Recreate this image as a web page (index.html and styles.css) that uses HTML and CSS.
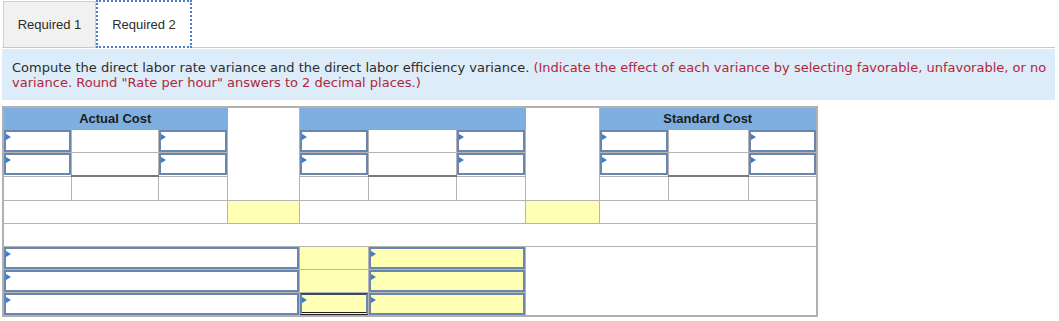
FILE: index.html
```html
<!DOCTYPE html>
<html>
<head>
<meta charset="utf-8">
<link rel="stylesheet" href="styles.css">
</head>
<body>
<div class="page">
  <div class="tabs">
    <div class="tab">Required 1</div>
    <div class="tab active">Required 2</div>
  </div>
  <div class="instr"><span>Compute the direct labor rate variance and the direct labor efficiency variance.</span> <span class="red">(Indicate the effect of each variance by selecting favorable, unfavorable, or no</span> <span class="red">variance. Round "Rate per hour" answers to 2 decimal places.)</span></div>
  <table class="grid">
    <colgroup>
      <col class="c68"><col class="c87"><col class="c69">
      <col class="c72">
      <col class="c69"><col class="c88"><col class="c69">
      <col class="c74">
      <col class="c69"><col class="c80"><col class="c69">
    </colgroup>
    <tr>
      <th colspan="3" class="hdr">Actual Cost</th>
      <td rowspan="4" class="gap"></td>
      <th colspan="3" class="hdr"></th>
      <td rowspan="4" class="gap"></td>
      <th colspan="3" class="hdr">Standard Cost</th>
    </tr>
    <tr>
      <td class="in"><div class="box dd"></div></td><td class="plain"></td><td class="in"><div class="box dd"></div></td>
      <td class="in"><div class="box dd"></div></td><td class="plain"></td><td class="in"><div class="box dd"></div></td>
      <td class="in"><div class="box dd"></div></td><td class="plain"></td><td class="in"><div class="box dd"></div></td>
    </tr>
    <tr>
      <td class="in"><div class="box dd"></div></td><td class="plain tot"></td><td class="in"><div class="box dd"></div></td>
      <td class="in"><div class="box dd"></div></td><td class="plain tot"></td><td class="in"><div class="box dd"></div></td>
      <td class="in"><div class="box dd"></div></td><td class="plain tot"></td><td class="in"><div class="box dd"></div></td>
    </tr>
    <tr class="tall">
      <td></td><td></td><td></td>
      <td></td><td></td><td></td>
      <td></td><td></td><td></td>
    </tr>
    <tr>
      <td colspan="3"></td><td class="yel"></td>
      <td colspan="3"></td><td class="yel"></td>
      <td colspan="3"></td>
    </tr>
    <tr>
      <td colspan="11"></td>
    </tr>
    <tr>
      <td colspan="4" class="in"><div class="box dd"></div></td>
      <td class="yel"></td>
      <td colspan="2" class="in"><div class="box dd ybox"></div></td>
      <td colspan="4" rowspan="3" class="blank"></td>
    </tr>
    <tr>
      <td colspan="4" class="in"><div class="box dd"></div></td>
      <td class="yel"></td>
      <td colspan="2" class="in"><div class="box dd ybox"></div></td>
    </tr>
    <tr>
      <td colspan="4" class="in"><div class="box dd"></div></td>
      <td class="in"><div class="box dd ybox focus"></div></td>
      <td colspan="2" class="in"><div class="box dd ybox"></div></td>
    </tr>
  </table>
</div>
</body>
</html>
```

FILE: styles.css
```css
html, body {
  margin: 0;
  padding: 0;
  background: #ffffff;
}

.page {
  padding: 1px 4px 0 2px;
  font-family: "Liberation Sans", Arial, sans-serif;
}

.tabs {
  display: flex;
  padding-left: 1px;
  border-bottom: 1px solid #c9c9c9;
  height: 46px;
}

.tab {
  width: 93px;
  height: 46px;
  box-sizing: border-box;
  display: flex;
  align-items: center;
  justify-content: center;
  font-size: 13px;
  color: #2b2b2b;
  background: #f1f1f1;
  border: 1px solid #cfcfcf;
  border-bottom: none;
}

.tab.active {
  width: 96px;
  background: #ffffff;
  border: 2px dotted #4a7cc0;
  margin-top: -1px;
  height: 48px;
}

.instr {
  margin-top: 1px;
  background: #dcecf8;
  padding: 11px 8px 10px 10px;
  font-family: "DejaVu Sans", Verdana, sans-serif;
  font-size: 13px;
  line-height: 15px;
  color: #2d2d2d;
}

.red {
  color: #b3263c;
}

.grid {
  margin-top: 6px;
  border-collapse: collapse;
  table-layout: fixed;
  width: 814px;
  border: 2px solid #b0b0b0;
}

.c68 { width: 68px; }
.c87 { width: 87px; }
.c69 { width: 69px; }
.c72 { width: 72px; }
.c88 { width: 88px; }
.c74 { width: 74px; }
.c80 { width: 80px; }

.grid td, .grid th {
  border: 1px solid #b4b4b4;
  padding: 0;
  height: 22px;
  background: #ffffff;
}

.grid .hdr {
  background: #7eafe0;
  font-size: 13px;
  font-weight: bold;
  color: #1c1c1c;
  text-align: center;
  vertical-align: middle;
  border-color: #a4a4a4;
  height: 21px;
}

.grid .gap {
  background: #ffffff;
}

.grid .tall td {
  height: 23px;
}

.grid .tot {
  border-bottom: 2px solid #7a7a7a;
}

.grid .yel {
  background: #ffffb4;
}

.grid td.in {
  padding: 0;
  vertical-align: top;
}

.box {
  position: relative;
  height: 22px;
  box-sizing: border-box;
  border: 2px solid #6a86ad;
  background: #ffffff;
}

.box.ybox {
  background: #ffffb4;
}

.box.focus {
  border-top: 2px solid #3c4c60;
  border-bottom: 3px double #1e1e1e;
  border-left-color: #6a86ad;
}

.dd::before {
  content: "";
  position: absolute;
  left: 0;
  top: 2px;
  border-left: 5px solid #3b7bd0;
  border-top: 3px solid transparent;
  border-bottom: 3px solid transparent;
}
```
